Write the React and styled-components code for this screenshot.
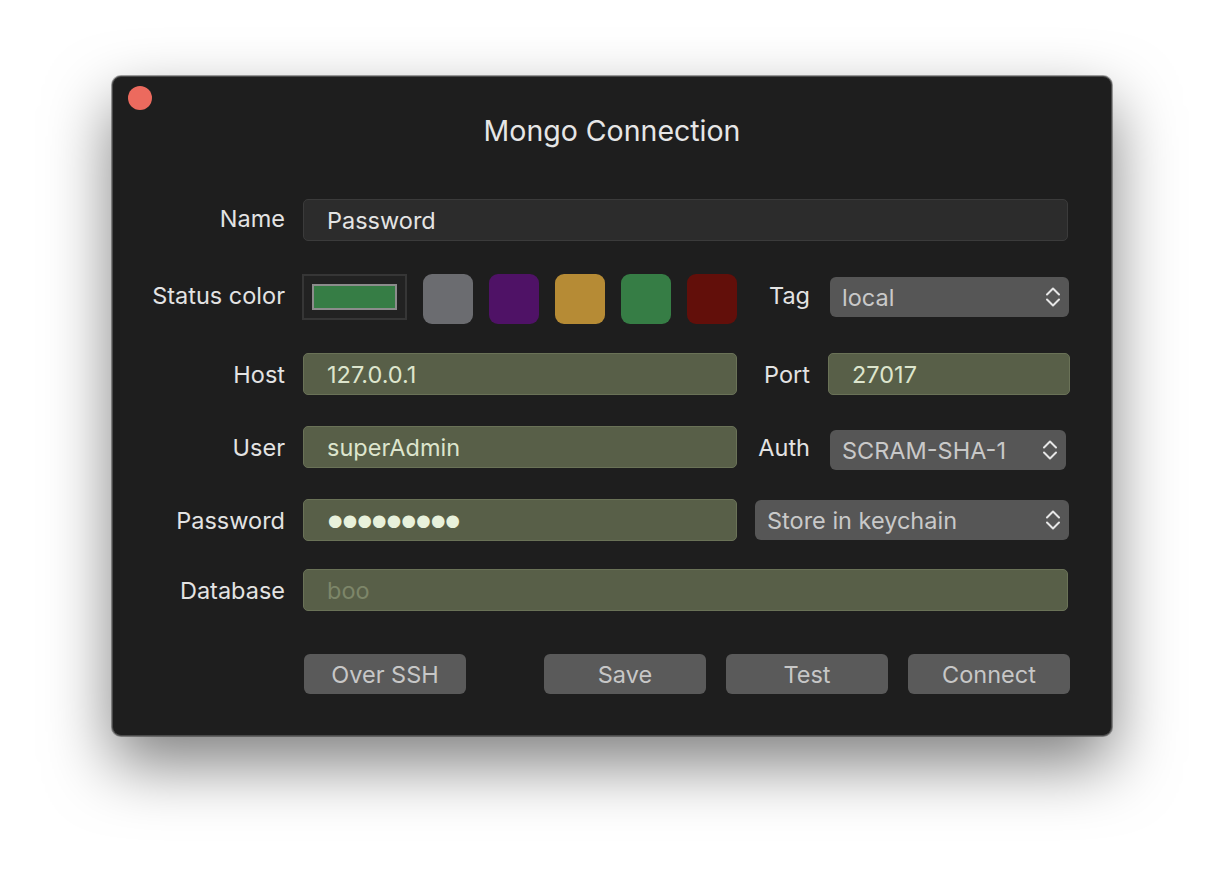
import React from "react";
import styled, { createGlobalStyle } from "styled-components";

const Global = createGlobalStyle`
  html, body { margin: 0; padding: 0; background: #ffffff; }
  body { font-family: Inter, "Noto Sans", "Liberation Sans", sans-serif; }
`;

const Page = styled.div`
  width: 1224px;
  height: 884px;
  padding: 76px 0 0 112px;
  box-sizing: border-box;
  background: #fff;
`;

const Window = styled.div`
  width: 1000px;
  height: 660px;
  box-sizing: border-box;
  background: #1e1e1e;
  border: 1px solid #4a4a4a;
  border-radius: 9px;
  box-shadow: 0 28px 64px rgba(0, 0, 0, 0.5), 0 0 0 1px rgba(0,0,0,0.35);
  display: flex;
  flex-direction: column;
`;

const TitleBar = styled.div`
  display: flex;
  align-items: center;
  padding: 9px 15px 0;
  height: 33px;
  box-sizing: border-box;
`;

const CloseDot = styled.div`
  width: 24px;
  height: 24px;
  border-radius: 50%;
  background: #ec6a5e;
`;

const Title = styled.h1`
  margin: 0;
  font-weight: 400;
  font-size: 28.5px;
  line-height: 42px;
  color: #e6e6e6;
  text-align: center;
`;

const Form = styled.div`
  padding: 0 0 0 17px;
  display: flex;
  flex-direction: column;
`;

const Row = styled.div`
  display: grid;
  grid-template-columns: 155px 434px 55px 240px;
  grid-template-rows: ${(p) => p.$h || 42}px;
  column-gap: 18px;
  align-items: center;
  margin-top: ${(p) => p.$mt}px;
  height: ${(p) => p.$h || 42}px;
`;

const Label = styled.div`
  text-align: right;
  font-size: 23.5px;
  color: #e3e3e3;
  white-space: nowrap;
  margin-top: ${(p) => p.$dy || 0}px;
`;

const Input = styled.div`
  height: 42px;
  box-sizing: border-box;
  border-radius: 5px;
  display: flex;
  align-items: center;
  padding-left: 23px;
  font-size: 23.5px;
  grid-column: ${(p) => p.$span || "auto"};
  margin-right: ${(p) => p.$mr || 0}px;
  background: ${(p) => (p.$olive ? "#585f48" : "#2c2c2c")};
  border: 1px solid ${(p) => (p.$olive ? "#6a7257" : "#3b3b3b")};
  color: ${(p) => (p.$placeholder ? "#7d8669" : p.$olive ? "#dde5cd" : "#e4e4e4")};
  white-space: nowrap;
`;

const Dots = styled.span`
  font-family: "DejaVu Sans", sans-serif;
  font-size: 16.5px;
  letter-spacing: 0.3px;
  color: #e8f1db;
  margin-left: 1px;
`;

const Select = styled.div`
  height: 40px;
  box-sizing: border-box;
  border-radius: 6px;
  background: #565656;
  display: flex;
  align-items: center;
  justify-content: space-between;
  padding: 0 8px 0 12px;
  font-size: 23.5px;
  color: #c9c9c9;
  grid-column: ${(p) => p.$span || "auto"};
  margin: ${(p) => p.$dy || 0}px ${(p) => p.$mr || 0}px ${(p) => -(p.$dy || 0)}px ${(p) => p.$ml || 0}px;
  white-space: nowrap;
`;

const Swatches = styled.div`
  display: flex;
  align-items: flex-start;
  gap: 16px;
  margin-left: -1px;
  height: 46px;
`;

const SelectedSwatch = styled.div`
  width: 106px;
  height: 46px;
  box-sizing: border-box;
  border: 2px solid #363636;
  background: #222;
  padding: 8px;
`;

const SelectedInner = styled.div`
  width: 100%;
  height: 100%;
  box-sizing: border-box;
  border: 2px solid #8c8c8c;
  background: #367d45;
`;

const Swatch = styled.div`
  width: 50px;
  height: 50px;
  flex: none;
  border-radius: 9px;
  background: ${(p) => p.$c};
`;

const ButtonRow = styled.div`
  display: flex;
  align-items: center;
  margin-top: 43px;
  padding-left: 174px;
  width: 940px;
  box-sizing: border-box;
`;

const Button = styled.div`
  width: 162px;
  height: 40px;
  box-sizing: border-box;
  border-radius: 6px;
  background: #5a5a5a;
  color: #c7c7c7;
  font-size: 23.5px;
  display: flex;
  align-items: center;
  justify-content: center;
  margin-left: ${(p) => p.$ml || 0}px;
`;

const Spacer = styled.div`
  flex: 1;
`;

const Chevrons = () => (
  <svg width="16" height="26" viewBox="0 0 16 26" fill="none">
    <path d="M2 10.5 L8 4.5 L14 10.5" stroke="#e6e6e6" strokeWidth="2" strokeLinecap="round" strokeLinejoin="round" />
    <path d="M2 15.5 L8 21.5 L14 15.5" stroke="#e6e6e6" strokeWidth="2" strokeLinecap="round" strokeLinejoin="round" />
  </svg>
);

export default function App() {
  return (
    <Page>
      <Global />
      <Window>
        <TitleBar>
          <CloseDot />
        </TitleBar>
        <Title>Mongo Connection</Title>
        <Form>
          <Row $mt={47}>
            <Label $dy={-3}>Name</Label>
            <Input $span="2 / 5">Password</Input>
          </Row>
          <Row $mt={33} $h={46}>
            <Label $dy={-4}>Status color</Label>
            <Swatches>
              <SelectedSwatch>
                <SelectedInner />
              </SelectedSwatch>
              <Swatch $c="#6b6c70" />
              <Swatch $c="#4f1266" />
              <Swatch $c="#b68b35" />
              <Swatch $c="#367d45" />
              <Swatch $c="#620f0a" />
            </Swatches>
            <Label $dy={-3}>Tag</Label>
            <Select $ml={2} $mr={-1}>
              local
              <Chevrons />
            </Select>
          </Row>
          <Row $mt={33}>
            <Label>Host</Label>
            <Input $olive>127.0.0.1</Input>
            <Label>Port</Label>
            <Input $olive $mr={-2}>27017</Input>
          </Row>
          <Row $mt={31}>
            <Label>User</Label>
            <Input $olive>superAdmin</Input>
            <Label>Auth</Label>
            <Select $ml={2} $mr={2} $dy={3}>
              SCRAM-SHA-1
              <Chevrons />
            </Select>
          </Row>
          <Row $mt={31}>
            <Label>Password</Label>
            <Input $olive>
              <Dots>●●●●●●●●●</Dots>
            </Input>
            <Select $span="3 / 5" $mr={-1}>
              Store in keychain
              <Chevrons />
            </Select>
          </Row>
          <Row $mt={28}>
            <Label>Database</Label>
            <Input $olive $placeholder $span="2 / 5">boo</Input>
          </Row>
          <ButtonRow>
            <Button>Over SSH</Button>
            <Spacer />
            <Button>Save</Button>
            <Button $ml={20}>Test</Button>
            <Button $ml={20}>Connect</Button>
          </ButtonRow>
        </Form>
      </Window>
    </Page>
  );
}
